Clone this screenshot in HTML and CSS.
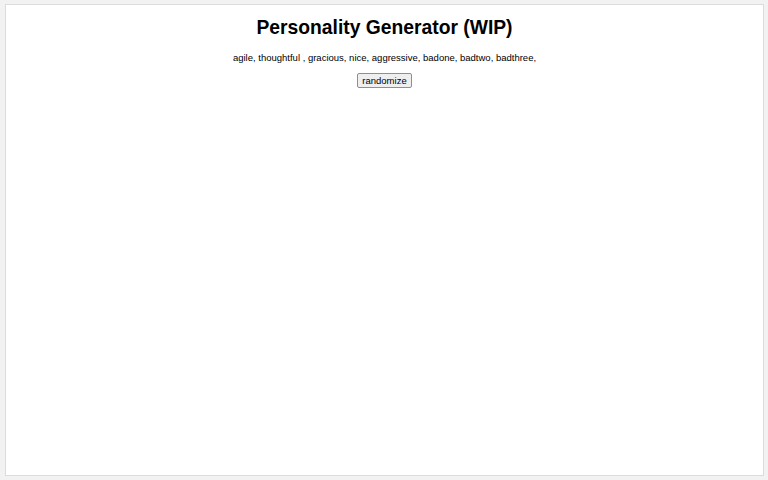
FILE: index.html
```html
<!DOCTYPE html>
<html>
<head>
<meta charset="utf-8">
<link rel="stylesheet" href="styles.css">
</head>
<body>
<div class="panel">
  <h1 class="title">Personality Generator (WIP)</h1>
  <p class="traits">agile, thoughtful , gracious, nice, aggressive, badone, badtwo, badthree,</p>
  <button class="randomize">randomize</button>
</div>
</body>
</html>
```

FILE: styles.css
```css
html, body {
  margin: 0;
  padding: 0;
}
body {
  background: #f2f2f2;
  padding: 4px 4px 4px 5px;
  font-family: "Liberation Sans", Arial, sans-serif;
}
.panel {
  background: #fff;
  border: 1px solid #dcdcdc;
  width: 759px;
  height: 472px;
  box-sizing: border-box;
  display: flex;
  flex-direction: column;
  align-items: center;
}
.title {
  margin: 12px 0 0;
  font-size: 19.3px;
  font-weight: bold;
  line-height: 22px;
  color: #000;
}
.traits {
  margin: 13px 0 0;
  font-size: 9.5px;
  line-height: 11px;
  color: #000;
}
.randomize {
  margin-top: 10px;
  height: 15px;
  font-family: "Liberation Sans", Arial, sans-serif;
  font-size: 9.5px;
  line-height: 11px;
  padding: 0 4px;
  background: #efefef;
  border: 1px solid #8f8f8f;
  border-radius: 2px;
  color: #000;
}
```
